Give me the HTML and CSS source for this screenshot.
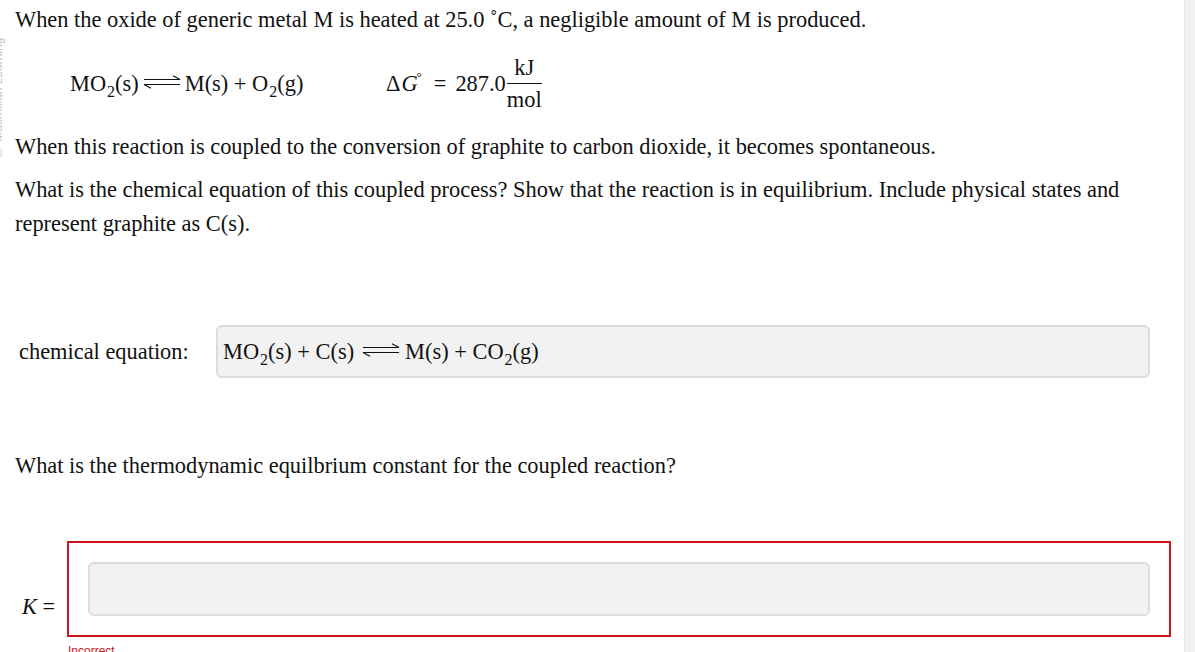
FILE: index.html
```html
<!DOCTYPE html>
<html>
<head>
<meta charset="utf-8">
<link rel="stylesheet" href="styles.css">
</head>
<body>
<div class="page">
  <main class="content">
    <p class="p1">When the oxide of generic metal M is heated at 25.0 ˚C, a negligible amount of M is produced.</p>
    <div class="eqrow">
      <span class="eq">MO<sub>2</sub>(s)<svg class="harpoon" width="38" height="14" viewBox="0 0 38 14"><path d="M1 4.5H37L30 0.8M37 9.5H1L8 13.2" fill="none" stroke="#111" stroke-width="1.1"/></svg>M(s) + O<sub>2</sub>(g)</span>
      <span class="dg">Δ<i>G</i><sup class="deg">°</sup><span class="eqsign">=</span>287.0<span class="frac"><span class="num">kJ</span><span class="den">mol</span></span></span>
    </div>
    <p class="p3">When this reaction is coupled to the conversion of graphite to carbon dioxide, it becomes spontaneous.</p>
    <p class="p4">What is the chemical equation of this coupled process? Show that the reaction is in equilibrium. Include physical states and represent graphite as C(s).</p>
    <div class="answer-row">
      <span class="label">chemical equation:</span>
      <div class="field filled">MO<sub>2</sub>(s) + C(s)<svg class="harpoon wide" width="38" height="14" viewBox="0 0 38 14"><path d="M1 4.5H37L30 0.8M37 9.5H1L8 13.2" fill="none" stroke="#111" stroke-width="1.1"/></svg>M(s) + CO<sub>2</sub>(g)</div>
    </div>
    <p class="q2">What is the thermodynamic equilbrium constant for the coupled reaction?</p>
    <div class="k-row">
      <span class="k-label"><i>K</i> =</span>
      <div class="err-box"><div class="field empty"></div></div>
    </div>
    <div class="incorrect">Incorrect</div>
  </main>
  <div class="scrollbar"></div>
</div>
<div class="watermark">© Macmillan Learning</div>
</body>
</html>
```
FILE: styles.css
```css
html, body {
  margin: 0;
  padding: 0;
  background: #fff;
}
body {
  width: 1195px;
  height: 652px;
  overflow: hidden;
  position: relative;
  font-family: "Liberation Serif", "Times New Roman", serif;
  font-size: 22.4px;
  color: #111;
}
.page {
  display: flex;
  height: 652px;
}
.content {
  flex: 1;
  padding: 3px 13px 0 15px;
  min-width: 0;
}
p {
  margin: 0;
  line-height: 34px;
}
sub {
  font-size: 16px;
  vertical-align: -6px;
  line-height: 0;
  margin-left: 1px;
}
.harpoon {
  vertical-align: 2px;
  margin: 0 4px 0 4px;
}
.harpoon.wide {
  margin: 0 5px 0 8px;
}
.eqrow {
  display: flex;
  align-items: center;
  margin: 15px 0 15px 55px;
  height: 63px;
}
.eq {
  width: 316px;
}
.dg {
  display: inline-flex;
  align-items: center;
}
.dg i {
  margin-left: 1px;
}
.deg {
  font-size: 13px;
  position: relative;
  top: -7px;
  line-height: 0;
  margin: 0 0 0 -1px;
}
.eqsign {
  margin: 0 9px 0 12px;
}
.frac {
  display: inline-flex;
  flex-direction: column;
  align-items: stretch;
  text-align: center;
  margin-left: 1px;
}
.frac .num {
  border-bottom: 1px solid #111;
  padding: 0 1px;
  line-height: 31px;
}
.frac .den {
  line-height: 31px;
}
.p4 {
  margin-top: 9px;
}
.answer-row {
  display: flex;
  align-items: center;
  margin-top: 84px;
  padding-left: 4px;
}
.label {
  width: 197px;
}
.field {
  flex: 1;
  background: #f2f2f2;
  border: 2px solid #dcdcdc;
  border-radius: 6px;
  box-sizing: border-box;
  height: 53px;
}
.field.filled {
  margin-right: 21px;
  padding: 10px 0 0 5px;
  line-height: 30px;
}
.q2 {
  margin-top: 71px;
}
.k-row {
  display: flex;
  margin-top: 58px;
}
.k-label {
  width: 52px;
  padding-left: 7px;
  box-sizing: border-box;
  align-self: flex-end;
  padding-bottom: 18px;
  line-height: 24px;
}
.err-box {
  flex: 1;
  border: 2px solid #d0121b;
  box-sizing: border-box;
  height: 96px;
  padding: 19px 19px 0 19px;
}
.err-box .field {
  height: 54px;
}
.incorrect {
  margin: 7px 0 0 53px;
  font-family: "Liberation Sans", Arial, sans-serif;
  font-size: 12px;
  color: #d0121b;
  line-height: 14px;
}
.scrollbar {
  width: 10px;
  background: #f1f1f1;
  border-left: 1px solid #e6e6e6;
}
.watermark {
  position: absolute;
  left: -9px;
  top: 14px;
  writing-mode: vertical-rl;
  transform: rotate(180deg);
  font-family: "Liberation Sans", Arial, sans-serif;
  font-size: 12px;
  color: #c4c4c4;
  height: 168px;
  text-align: center;
}
```
